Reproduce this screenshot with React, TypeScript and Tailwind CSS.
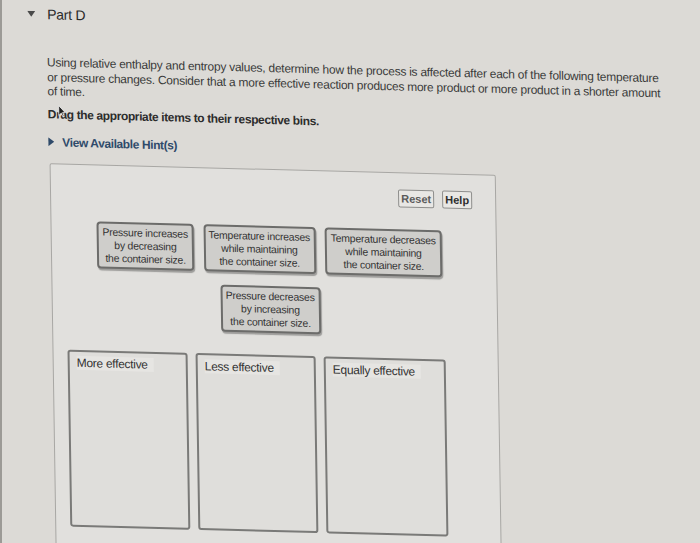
import React from 'react';

const chips = [
  { lines: ['Pressure increases', 'by decreasing', 'the container size.'], w: 'w-[97px]' },
  { lines: ['Temperature increases', 'while maintaining', 'the container size.'], w: 'w-[112px]' },
  { lines: ['Temperature decreases', 'while maintaining', 'the container size.'], w: 'w-[117px]' },
  { lines: ['Pressure decreases', 'by increasing', 'the container size.'], w: 'w-[100px]' },
];

const bins = [
  { label: 'More effective', w: 'w-[120px]' },
  { label: 'Less effective', w: 'w-[120px]' },
  { label: 'Equally effective', w: 'w-[122px]' },
];

const Chip: React.FC<{ lines: string[]; w: string }> = ({ lines, w }) => (
  <div
    className={`${w} h-[47px] rounded-[4px] border-2 border-[#6c6c6a] bg-[#cfcecb] py-[2px] text-center text-[10.5px] leading-[13px] tracking-[-0.25px] text-[#333] shadow-[1px_2px_1px_rgba(0,0,0,0.3)]`}
  >
    {lines.map((l, i) => (
      <div key={i} className="whitespace-nowrap">
        {l}
      </div>
    ))}
  </div>
);

export default function App() {
  return (
    <div
      className="w-[700px] h-[543px] overflow-hidden bg-[#dcdad6] border-l-2 border-[#9c9a96] text-[#3a3a3a]"
      style={{ fontFamily: '"Liberation Sans", Arial, sans-serif' }}
    >
      <div className="origin-top-left skew-y-[1.5deg] skew-x-[0.9deg] -ml-[2px]">
        {/* header */}
        <div className="flex h-[26px] items-center gap-[12px] pl-[27px]">
          <svg width="8" height="6" viewBox="0 0 8 6">
            <path d="M0 0 H8 L4 6 Z" fill="#4a4a4a" />
          </svg>
          <span className="text-[14px] text-[#2a2a2a] tracking-[-0.3px]">Part D</span>
        </div>

        <div className="mt-[28px] pl-[46px] text-[12px] leading-[14.5px] tracking-[-0.26px]">
          <div className="whitespace-nowrap">
            Using relative enthalpy and entropy values, determine how the process is affected after each of the following temperature
          </div>
          <div className="whitespace-nowrap">
            or pressure changes. Consider that a more effective reaction produces more product or more product in a shorter amount
          </div>
          <div className="whitespace-nowrap">of time.</div>
        </div>

        <div className="relative mt-[8px] pl-[46px] text-[12px] leading-[14px] font-bold tracking-[-0.38px] text-[#2c2c2c]">
          Drag the appropriate items to their respective bins.
          <svg className="absolute left-[56px] top-[-3px]" width="8" height="13" viewBox="0 0 8 13">
            <path d="M1 1 V11 L3.5 8.5 L5 12 L6.3 11.4 L4.8 8 H7.5 Z" fill="#1e1e1e" stroke="#f2f2f2" strokeWidth="0.8" />
          </svg>
        </div>

        <div className="mt-[14px] flex items-center gap-[8px] pl-[46px] text-[12px] leading-[14px] font-bold tracking-[-0.4px] text-[#2f4a6a]">
          <svg width="6" height="9" viewBox="0 0 6 9">
            <path d="M0 0 L6 4.5 L0 9 Z" fill="#2f4a6a" />
          </svg>
          <span>View Available Hint(s)</span>
        </div>

        {/* drag and drop area */}
        <div className="mt-[14px] ml-[47px] w-[446px] h-[420px] rounded-[2px] border border-[#a8a7a4] bg-[#e1e0dd]">
          <div className="flex justify-end gap-[8px] pt-[16px] pr-[23px]">
            <button className="h-[18px] w-[36px] rounded-[2px] border border-[#8e8e8c] bg-[#e8e7e4] text-[11px] font-bold text-[#5a5a5a]">
              Reset
            </button>
            <button className="h-[18px] w-[30px] rounded-[2px] border border-[#8e8e8c] bg-[#e8e7e4] text-[11px] font-bold text-[#2e2e2e]">
              Help
            </button>
          </div>

          <div className="mt-[22px] ml-[45px] flex w-[345px] flex-wrap justify-center gap-x-[9.5px] gap-y-[13px]">
            {chips.map((c, i) => (
              <Chip key={i} lines={c.lines} w={c.w} />
            ))}
          </div>

          <div className="mt-[22px] ml-[14px] flex gap-[8px]">
            {bins.map((b) => (
              <div
                key={b.label}
                className={`${b.w} h-[177px] rounded-[3px] border-2 border-[#7a7a78] bg-[#dfdedb] pl-[7px] pt-[4px] leading-none`}
              >
                <span className="block w-fit bg-[#e6e5e2] pr-[6px] text-[12px] leading-[14px] tracking-[-0.3px] text-[#333]">
                  {b.label}
                </span>
              </div>
            ))}
          </div>
        </div>
      </div>
    </div>
  );
}
